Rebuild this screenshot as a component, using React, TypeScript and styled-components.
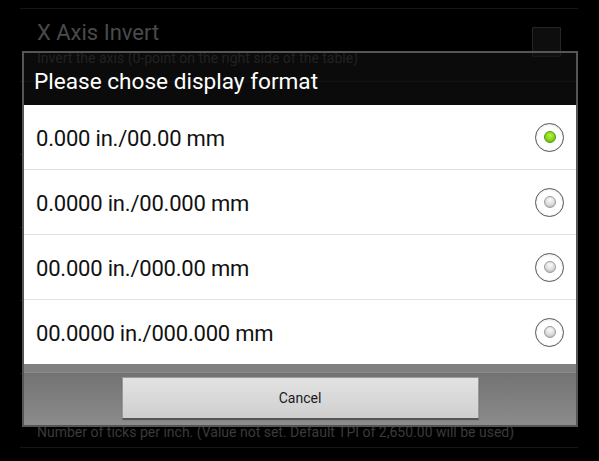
import React from "react";
import styled, { createGlobalStyle } from "styled-components";

const Global = createGlobalStyle`
  html, body { margin: 0; padding: 0; background: #000; }
  body { width: 599px; height: 461px; overflow: hidden; font-family: Roboto, "Noto Sans", sans-serif; }
`;

const Screen = styled.div`
  position: relative;
  width: 599px;
  height: 461px;
  background: #000;
  padding: 8px 21px 0 20px;
  box-sizing: border-box;
`;

const PrefList = styled.div`
  display: flex;
  flex-direction: column;
  border-top: 1px solid #161616;
`;

const PrefItem = styled.div<{ $h: number }>`
  display: flex;
  align-items: flex-start;
  justify-content: space-between;
  height: ${(p) => p.$h}px;
  border-bottom: 1px solid #161616;
  padding: 0 17px 0 17px;
  box-sizing: content-box;
`;

const PrefText = styled.div<{ $pad: number }>`
  display: flex;
  flex-direction: column;
  padding-top: ${(p) => p.$pad}px;
`;

const PrefTitle = styled.div`
  font-size: 22px;
  line-height: 28px;
  color: #4a4a4a;
`;

const PrefSummary = styled.div`
  font-size: 14px;
  line-height: 20px;
  color: #3a3a3a;
  margin-top: 1px;
`;

const CheckBox = styled.div`
  width: 27px;
  height: 28px;
  margin-top: 18px;
  background: #0e0e0e;
  border: 1px solid #262626;
  border-radius: 1px;
`;

const Dialog = styled.div`
  position: absolute;
  left: 22px;
  top: 51px;
  width: 552px;
  height: 372px;
  border: 2px solid #555;
  display: flex;
  flex-direction: column;
`;

const DialogTitle = styled.div`
  height: 52px;
  display: flex;
  align-items: center;
  padding-left: 10px;
  padding-top: 4px;
  box-sizing: border-box;
  background: rgba(18, 18, 18, 0.6);
  color: #fff;
  font-size: 22.6px;
`;

const OptionList = styled.div`
  display: flex;
  flex-direction: column;
  background: #fff;
`;

const Option = styled.div<{ $first?: boolean }>`
  height: 64px;
  display: flex;
  align-items: center;
  justify-content: space-between;
  padding: 0 12px 0 12px;
  border-top: ${(p) => (p.$first ? "none" : "1px solid #e2e2e2")};
  color: #111;
`;

const OptionLabel = styled.span`
  font-size: 22px;
  letter-spacing: -0.2px;
  padding-top: 2px;
`;

const Radio = styled.div`
  width: 27px;
  height: 27px;
  border-radius: 50%;
  border: 1px solid #555;
  box-shadow: inset 0 0 0 1px #f4f4f4, inset 0 1px 2px rgba(0, 0, 0, 0.12);
  display: flex;
  align-items: center;
  justify-content: center;
  background: #fff;
`;

const Dot = styled.div<{ $on?: boolean }>`
  width: 10px;
  height: 10px;
  border-radius: 50%;
  background: ${(p) =>
    p.$on
      ? "radial-gradient(circle at 50% 35%, #b6f04a 0%, #88d419 55%, #5da80c 100%)"
      : "radial-gradient(circle at 50% 30%, #fafafa 0%, #dcdcdc 55%, #a8a8a8 100%)"};
  border: 1px solid ${(p) => (p.$on ? "#4f9a0a" : "#9a9a9a")};
`;

const ButtonBar = styled.div`
  flex: 1;
  display: flex;
  flex-direction: column;
  background: linear-gradient(#6e6e6e, #8c8c8c);
`;

const BarBand = styled.div`
  height: 8px;
  background: #808080;
  border-bottom: 1px solid #8a8a8a;
`;

const BarBody = styled.div`
  flex: 1;
  display: flex;
  justify-content: center;
  padding-top: 4px;
`;

const Button = styled.div`
  width: 355px;
  height: 40px;
  display: flex;
  align-items: center;
  justify-content: center;
  background: linear-gradient(#e2e2e2, #cfcfcf);
  border: 1px solid #9a9a9a;
  border-bottom-color: #555;
  border-radius: 1px;
  box-shadow: 0 1px 1px rgba(0, 0, 0, 0.4);
  color: #1a1a1a;
  font-size: 14px;
`;

const options = [
  "0.000 in./00.00 mm",
  "0.0000 in./00.000 mm",
  "00.000 in./000.00 mm",
  "00.0000 in./000.000 mm",
];

export default function App() {
  return (
    <>
      <Global />
      <Screen>
        <PrefList>
          <PrefItem $h={72}>
            <PrefText $pad={10}>
              <PrefTitle>X Axis Invert</PrefTitle>
              <PrefSummary>Invert the axis (0-point on the right side of the table)</PrefSummary>
            </PrefText>
            <CheckBox />
          </PrefItem>
          <PrefItem $h={72} />
          <PrefItem $h={72} />
          <PrefItem $h={72} />
          <PrefItem $h={72} />
          <PrefItem $h={73}>
            <PrefText $pad={19}>
              <PrefTitle>Ticks per inch</PrefTitle>
              <PrefSummary>Number of ticks per inch. (Value not set. Default TPI of 2,650.00 will be used)</PrefSummary>
            </PrefText>
          </PrefItem>
        </PrefList>
        <Dialog>
          <DialogTitle>Please chose display format</DialogTitle>
          <OptionList>
            {options.map((o, i) => (
              <Option key={o} $first={i === 0}>
                <OptionLabel>{o}</OptionLabel>
                <Radio>
                  <Dot $on={i === 0} />
                </Radio>
              </Option>
            ))}
          </OptionList>
          <ButtonBar>
            <BarBand />
            <BarBody>
              <Button>Cancel</Button>
            </BarBody>
          </ButtonBar>
        </Dialog>
      </Screen>
    </>
  );
}
